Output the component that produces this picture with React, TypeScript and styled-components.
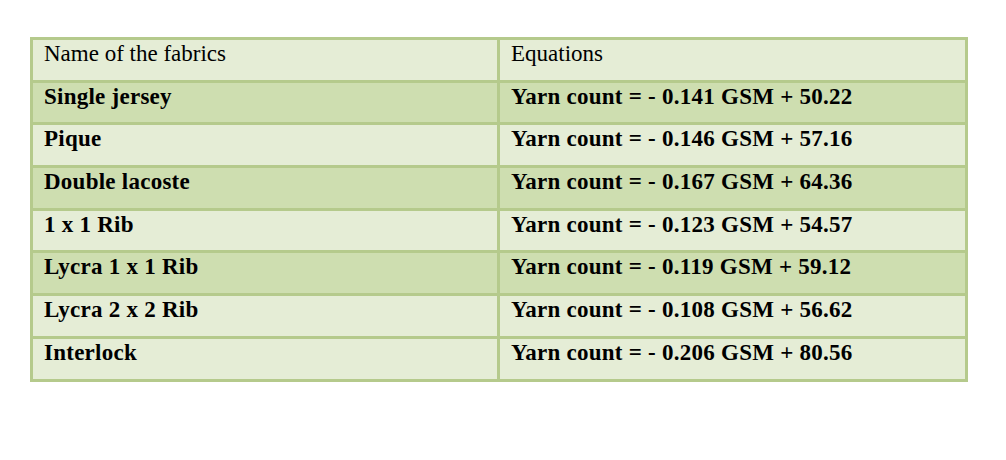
import styled, { createGlobalStyle } from "styled-components"

const GlobalStyle = createGlobalStyle`
    html, body {
        margin: 0;
        padding: 0;
        background: #ffffff;
    }
`

const rows: [string, string][] = [
    ["Single jersey", "Yarn count = - 0.141 GSM + 50.22"],
    ["Pique", "Yarn count = - 0.146 GSM + 57.16"],
    ["Double lacoste", "Yarn count = - 0.167 GSM + 64.36"],
    ["1 x 1 Rib", "Yarn count = - 0.123 GSM + 54.57"],
    ["Lycra 1 x 1 Rib", "Yarn count = - 0.119 GSM + 59.12"],
    ["Lycra 2 x 2 Rib", "Yarn count = - 0.108 GSM + 56.62"],
    ["Interlock", "Yarn count = - 0.206 GSM + 80.56"],
]

// rows 1, 3, 5 of the body carry the darker band
const isShaded = (i: number) => i === 0 || i === 2 || i === 4

export default function App() {
    return (
        <Page>
            <GlobalStyle />
            <Table>
                <Cell>Name of the fabrics</Cell>
                <Cell>Equations</Cell>
                {rows.map(([name, eq], i) => [
                    <Cell key={name} $bold $shaded={isShaded(i)}>{name}</Cell>,
                    <Cell key={eq} $bold $shaded={isShaded(i)}>{eq}</Cell>,
                ])}
            </Table>
        </Page>
    )
}

const Page = styled.div`
    width: 1006px;
    height: 460px;
    padding: 37px 0 0 30px;
    box-sizing: border-box;
    background: #ffffff;
`

const Table = styled.div`
    width: 938px;
    box-sizing: border-box;
    display: grid;
    grid-template-columns: 464px 465px;
    grid-auto-rows: 39.7px;
    gap: 3px;
    padding: 3px;
    background: #b5ca8c;
`

const Cell = styled.div<{ $bold?: boolean; $shaded?: boolean }>`
    background: ${({ $shaded }) => ($shaded ? "#cedeb0" : "#e5edd6")};
    color: #000000;
    font-family: "Liberation Serif", "Times New Roman", serif;
    font-size: 23px;
    font-weight: ${({ $bold }) => ($bold ? 700 : 400)};
    letter-spacing: ${({ $bold }) => ($bold ? "0.25px" : "0")};
    padding: 1px 0 0 11px;
    white-space: nowrap;
    line-height: normal;
`
